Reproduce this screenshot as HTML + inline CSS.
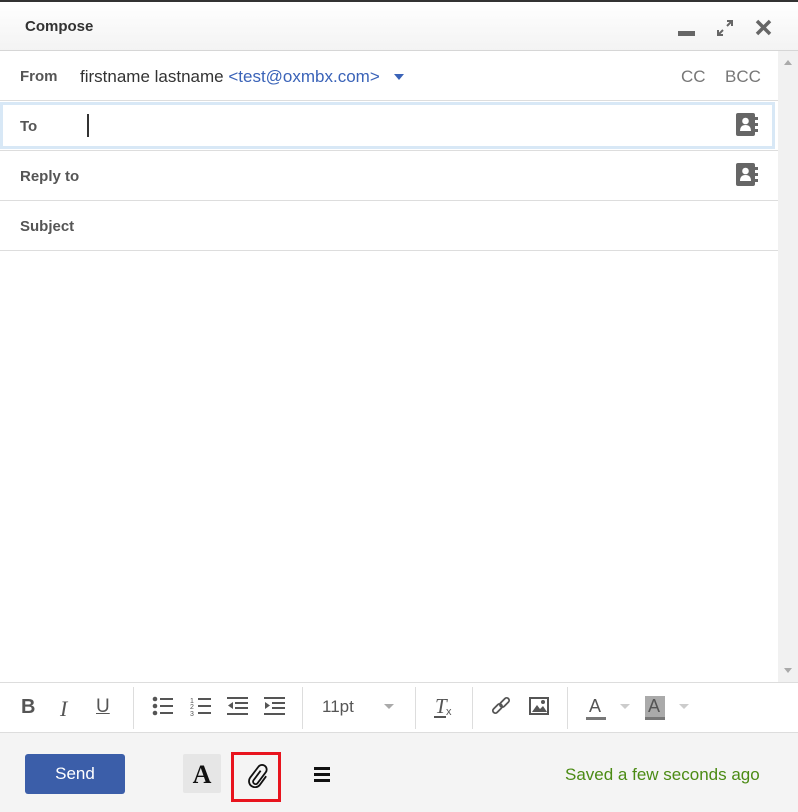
<!DOCTYPE html>
<html><head><style>
*{margin:0;padding:0;box-sizing:border-box}
body{width:798px;height:812px;overflow:hidden;background:#fff;font-family:"Liberation Sans",sans-serif;position:relative}
.a{position:absolute}
.lbl{font-size:15px;font-weight:bold;color:#555}
.hr{position:absolute;left:0;width:778px;height:1px;background:#ddd}
.tb{position:absolute;top:696px;color:#555;font-size:20px}
.sep{position:absolute;top:687px;width:1px;height:42px;background:#ddd}
</style></head><body>
<div class="a" style="left:0;top:0;width:798px;height:2px;background:#333"></div>
<div class="a" style="left:0;top:2px;width:798px;height:48px;background:linear-gradient(#fff,#f3f3f3)"></div>
<div class="a" style="left:0;top:50px;width:798px;height:1px;background:#d6d6d6"></div>
<div class="a" style="left:25px;top:18px;font-size:15px;font-weight:bold;color:#333">Compose</div>
<div class="a" style="left:678px;top:31px;width:17px;height:5px;background:#666"></div>
<svg class="a" style="left:716px;top:19px" width="18" height="18" viewBox="0 0 18 18"><path d="M11 2h5v5M16 2l-5 5M2 11v5h5M2 16l5-5" stroke="#666" stroke-width="2" fill="none"/></svg>
<svg class="a" style="left:755px;top:19px" width="17" height="17" viewBox="0 0 17 17"><path d="M2 2l13 13M15 2L2 15" stroke="#666" stroke-width="3.5"/></svg>
<div class="a" style="left:778px;top:51px;width:20px;height:631px;background:#f1f1f1"></div>
<div class="a" style="left:784px;top:60px;width:0;height:0;border:4px solid transparent;border-bottom:5px solid #aaa;border-top:0"></div>
<div class="a" style="left:784px;top:668px;width:0;height:0;border:4px solid transparent;border-top:5px solid #aaa;border-bottom:0"></div>
<div class="a lbl" style="left:20px;top:68px">From</div>
<div class="a" style="left:80px;top:67px;font-size:17px;color:#333">firstname lastname <span style="color:#3a63b8">&lt;test@oxmbx.com&gt;</span></div>
<div class="a" style="left:394px;top:74px;border:5px solid transparent;border-top:6px solid #3a63b8;border-bottom:0"></div>
<div class="a" style="left:681px;top:67px;font-size:17px;color:#777">CC</div>
<div class="a" style="left:725px;top:67px;font-size:17px;color:#777">BCC</div>
<div class="hr" style="top:100px"></div>
<div class="a" style="left:0;top:102px;width:775px;height:47px;border:3px solid #d8e8f6"></div>
<div class="a lbl" style="left:20px;top:118px">To</div>
<div class="a" style="left:87px;top:114px;width:2px;height:23px;background:#333"></div>
<svg class="a" style="left:736px;top:113px" width="22" height="23" viewBox="0 0 22 23"><rect x="0" y="0" width="19" height="23" rx="2" fill="#666"/><rect x="19" y="4" width="3" height="3" fill="#666"/><rect x="19" y="10" width="3" height="3" fill="#666"/><rect x="19" y="16" width="3" height="3" fill="#666"/><circle cx="9.5" cy="8" r="3.3" fill="#fff"/><path d="M4 18q0-6 5.5-6t5.5 6z" fill="#fff"/></svg>
<div class="hr" style="top:150px"></div>
<div class="a lbl" style="left:20px;top:168px">Reply to</div>
<svg class="a" style="left:736px;top:163px" width="22" height="23" viewBox="0 0 22 23"><rect x="0" y="0" width="19" height="23" rx="2" fill="#666"/><rect x="19" y="4" width="3" height="3" fill="#666"/><rect x="19" y="10" width="3" height="3" fill="#666"/><rect x="19" y="16" width="3" height="3" fill="#666"/><circle cx="9.5" cy="8" r="3.3" fill="#fff"/><path d="M4 18q0-6 5.5-6t5.5 6z" fill="#fff"/></svg>
<div class="hr" style="top:200px"></div>
<div class="a lbl" style="left:20px;top:218px">Subject</div>
<div class="hr" style="top:250px"></div>
<div class="a" style="left:0;top:682px;width:798px;height:1px;background:#ddd"></div>
<div class="tb" style="left:21px;font-weight:bold">B</div>
<div class="tb" style="left:60px;font-style:italic;font-family:'Liberation Serif',serif;font-size:22px">I</div>
<div class="tb" style="left:96px;text-decoration:underline;font-size:19px">U</div>
<div class="sep" style="left:133px"></div>
<svg class="a" style="left:152px;top:696px" width="22" height="20"><g fill="#555"><circle cx="3" cy="3" r="2.3"/><circle cx="3" cy="10" r="2.3"/><circle cx="3" cy="17" r="2.3"/><rect x="8" y="2" width="13" height="2"/><rect x="8" y="9" width="13" height="2"/><rect x="8" y="16" width="13" height="2"/></g></svg>
<svg class="a" style="left:190px;top:695px" width="22" height="22"><g fill="#555"><rect x="8" y="3" width="13" height="2"/><rect x="8" y="10" width="13" height="2"/><rect x="8" y="17" width="13" height="2"/></g><text x="0" y="8" font-size="7" fill="#555">1</text><text x="0" y="14" font-size="7" fill="#555">2</text><text x="0" y="21" font-size="7" fill="#555">3</text></svg>
<svg class="a" style="left:227px;top:696px" width="22" height="20"><g fill="#555"><rect x="0" y="1" width="21" height="2"/><rect x="8" y="6" width="13" height="2"/><rect x="8" y="11" width="13" height="2"/><rect x="0" y="17" width="21" height="2"/><path d="M6 6v7l-5-3.5z"/></g></svg>
<svg class="a" style="left:264px;top:696px" width="22" height="20"><g fill="#555"><rect x="0" y="1" width="21" height="2"/><rect x="8" y="6" width="13" height="2"/><rect x="8" y="11" width="13" height="2"/><rect x="0" y="17" width="21" height="2"/><path d="M1 6v7l5-3.5z"/></g></svg>
<div class="sep" style="left:302px"></div>
<div class="a" style="left:322px;top:697px;font-size:17px;color:#555">11pt</div>
<div class="a" style="left:384px;top:704px;border:5px solid transparent;border-top:5px solid #aaa;border-bottom:0"></div>
<div class="sep" style="left:415px"></div>
<div class="a" style="left:435px;top:694px;font-size:21px;font-style:italic;color:#555;font-family:'Liberation Serif',serif">T</div>
<div class="a" style="left:434px;top:716px;width:12px;height:2px;background:#555"></div>
<div class="a" style="left:446px;top:706px;font-size:11px;color:#555">x</div>
<div class="sep" style="left:472px"></div>
<svg class="a" style="left:490px;top:695px" width="22" height="22" viewBox="0 0 22 22"><g stroke="#555" stroke-width="1.8" fill="none"><rect x="2" y="11" width="11" height="5" rx="2.5" transform="rotate(-45 7.5 13.5)"/><rect x="9" y="5" width="11" height="5" rx="2.5" transform="rotate(-45 14.5 7.5)"/></g></svg>
<svg class="a" style="left:529px;top:697px" width="20" height="18"><rect x="1" y="1" width="18" height="16" fill="none" stroke="#555" stroke-width="2"/><path d="M3 15l5-7 3 4 3-3 4 6z" fill="#555"/><circle cx="14" cy="5" r="2" fill="#555"/></svg>
<div class="sep" style="left:567px"></div>
<div class="a" style="left:589px;top:696px;font-size:18px;color:#555">A</div>
<div class="a" style="left:586px;top:717px;width:20px;height:3px;background:#777"></div>
<div class="a" style="left:620px;top:704px;border:5px solid transparent;border-top:5px solid #ccc;border-bottom:0"></div>
<div class="a" style="left:645px;top:696px;width:20px;height:21px;background:#aaa"></div>
<div class="a" style="left:648px;top:696px;font-size:18px;color:#555">A</div>
<div class="a" style="left:645px;top:717px;width:20px;height:3px;background:#777"></div>
<div class="a" style="left:679px;top:704px;border:5px solid transparent;border-top:5px solid #ccc;border-bottom:0"></div>
<div class="a" style="left:0;top:732px;width:798px;height:80px;background:#f4f4f4;border-top:1px solid #ddd"></div>
<div class="a" style="left:25px;top:754px;width:100px;height:40px;background:#3b5ea9;border-radius:3px;color:#fff;font-size:17px;text-align:center;line-height:40px">Send</div>
<div class="a" style="left:183px;top:754px;width:38px;height:39px;background:#e6e6e6;border-radius:2px;font-family:'Liberation Serif',serif;font-weight:bold;font-size:26px;text-align:center;line-height:42px;color:#111">A</div>
<div class="a" style="left:231px;top:752px;width:50px;height:50px;border:3px solid #e8141e"></div>
<svg class="a" style="left:245px;top:762px" width="24" height="26" viewBox="0 0 24 26"><path d="M16 9l-8 9a2.5 2.5 0 0 0 4 3l9-10a4.5 4.5 0 0 0-7-6l-9 10a6 6 0 0 0 9 8l7-8" stroke="#111" stroke-width="1.8" fill="none" transform="rotate(-5 12 13)"/></svg>
<div class="a" style="left:314px;top:767px;width:16px;height:3px;background:#111"></div>
<div class="a" style="left:314px;top:773px;width:16px;height:3px;background:#111"></div>
<div class="a" style="left:314px;top:779px;width:16px;height:3px;background:#111"></div>
<div class="a" style="left:565px;top:765px;font-size:17px;color:#4b8b14">Saved a few seconds ago</div>
</body></html>
